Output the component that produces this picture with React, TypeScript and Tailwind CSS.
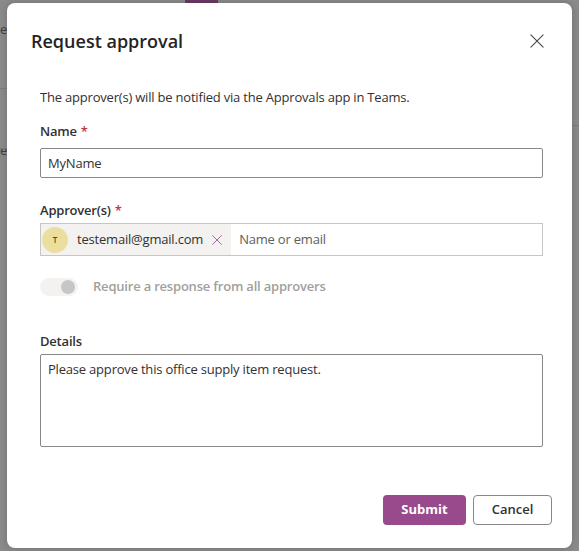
import React, { useState } from 'react';

const font = { fontFamily: '"Open Sans", "Noto Sans", sans-serif' };

const CloseIcon: React.FC<{ size: number; className?: string; stroke?: number }> = ({ size, className, stroke = 1.2 }) => (
    <svg width={size} height={size} viewBox="0 0 16 16" className={className} fill="none">
        <path d="M1 1L15 15M15 1L1 15" stroke="currentColor" strokeWidth={stroke} strokeLinecap="round" />
    </svg>
);

const Label: React.FC<{ text: string; required?: boolean }> = ({ text, required }) => (
    <div className="h-5 leading-5 text-[13px] font-semibold text-[#323130] tracking-[-0.2px]">
        {text}
        {required && <span className="ml-1 text-[#c4314b]">*</span>}
    </div>
);

export default function App() {
    const [name, setName] = useState('MyName');
    const [details, setDetails] = useState('Please approve this office supply item request.');

    return (
        <div className="relative w-[579px] h-[551px] overflow-hidden bg-[#8b8b8b]" style={font}>
            {/* page behind the overlay */}
            <div className="absolute left-0 top-[19px] text-[13px] text-[#3f3f3f] leading-5">e</div>
            <div className="absolute left-0 top-[140px] text-[13px] text-[#3f3f3f] leading-5">e</div>
            <div className="absolute left-0 top-[88px] w-[7px] h-px bg-[#7d7d7d]" />
            <div className="absolute left-0 top-[148px] w-[7px] h-px bg-[#7d7d7d]" />
            <div className="absolute right-0 top-[125px] w-[7px] h-px bg-[#7d7d7d]" />
            <div className="absolute left-[185px] top-0 w-[33px] h-[3px] bg-[#6a3a66]" />

            {/* dialog */}
            <div className="pl-[7px] pt-[3px]">
                <div className="relative w-[565px] h-[545px] rounded-[8px] bg-white flex flex-col shadow-[0_0_8px_rgba(0,0,0,0.2)]">
                    <div className="h-[76px] flex items-center justify-between pl-[24px] pr-[28px]">
                        <h1 className="text-[18px] font-semibold text-[#242424]">Request approval</h1>
                        <button className="text-[#424242]">
                            <CloseIcon size={14} />
                        </button>
                    </div>

                    <div className="pl-[33px] pr-[29px] flex flex-col tracking-[-0.2px]">
                        <p className="mt-[8px] h-5 leading-5 text-[13px] text-[#323130]">
                            The approver(s) will be notified via the Approvals app in Teams.
                        </p>

                        <div className="mt-[14px]">
                            <Label text="Name" required />
                        </div>
                        <input
                            value={name}
                            onChange={e => setName(e.target.value)}
                            className="mt-[7px] h-[30px] w-full rounded-[2px] border border-[#8a8886] px-[7px] text-[13px] text-[#323130] outline-none"
                        />

                        <div className="mt-[22px]">
                            <Label text="Approver(s)" required />
                        </div>
                        <div className="mt-[3px] h-[33px] w-full border border-[#c8c6c4] flex items-stretch">
                            <div className="flex items-center bg-[#f3f2f1] pl-[1px] pr-[9px]">
                                <div className="w-[26px] h-[26px] rounded-full bg-[#ebdfa0] flex items-center justify-center text-[8px] font-semibold text-[#5a4a10]">
                                    T
                                </div>
                                <span className="ml-[9px] text-[13px] text-[#323130]">testemail@gmail.com</span>
                                <CloseIcon size={10} stroke={1.3} className="ml-[9px] text-[#8e4a88]" />
                            </div>
                            <input
                                placeholder="Name or email"
                                className="flex-1 pl-[8px] text-[13px] text-[#323130] placeholder:text-[#605e5c] outline-none"
                            />
                        </div>

                        <div className="mt-[21px] h-5 flex items-center">
                            <div className="w-[38px] h-[18px] rounded-full bg-[#f3f2f1] flex items-center justify-end pr-[3px]">
                                <div className="w-[14px] h-[14px] rounded-full bg-[#c8c6c4]" />
                            </div>
                            <span className="ml-[15px] text-[13px] font-semibold text-[#a19f9d]">
                                Require a response from all approvers
                            </span>
                        </div>

                        <div className="mt-[34px]">
                            <Label text="Details" />
                        </div>
                        <textarea
                            value={details}
                            onChange={e => setDetails(e.target.value)}
                            className="mt-[3px] h-[93px] w-full resize-none rounded-[2px] border border-[#8a8886] px-[7px] py-[4px] text-[13px] leading-5 text-[#323130] outline-none"
                        />
                    </div>

                    <div className="mt-[48px] flex justify-end gap-[7px] pr-[20px]">
                        <button className="h-[30px] w-[83px] rounded-[4px] bg-[#994a8c] text-[13px] font-bold text-white">
                            Submit
                        </button>
                        <button className="h-[30px] w-[79px] rounded-[4px] border border-[#8a8886] bg-white text-[13px] font-semibold text-[#323130]">
                            Cancel
                        </button>
                    </div>
                </div>
            </div>
        </div>
    );
}
